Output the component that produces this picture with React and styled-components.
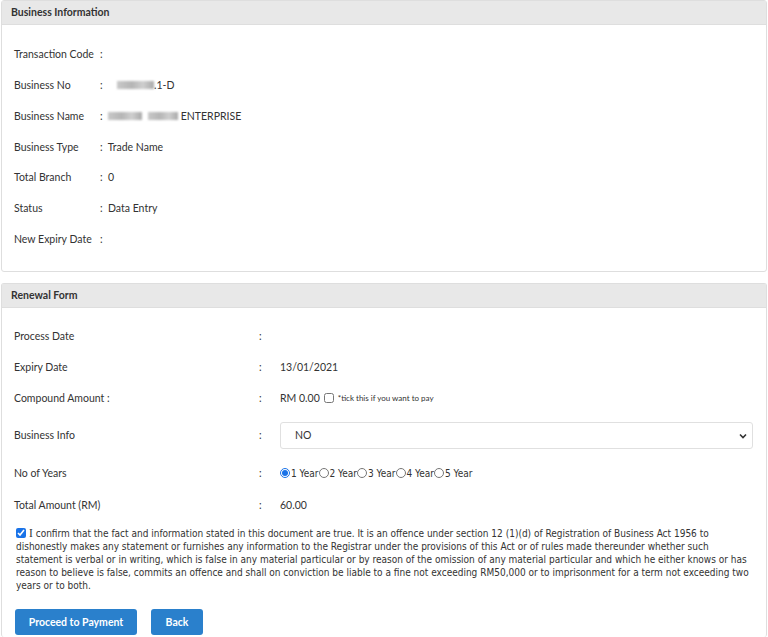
import React, { useState } from 'react';
import styled, { createGlobalStyle } from 'styled-components';

const GlobalStyle = createGlobalStyle`
  html, body {
    margin: 0;
    padding: 0;
    background: #ffffff;
  }
  body {
    font-family: Lato, "Open Sans", sans-serif;
    color: #333333;
  }
`;

const businessRows = [
  { label: 'Transaction Code', value: null },
  { label: 'Business No', value: 'no' },
  { label: 'Business Name', value: 'name' },
  { label: 'Business Type', value: 'Trade Name' },
  { label: 'Total Branch', value: '0' },
  { label: 'Status', value: 'Data Entry' },
  { label: 'New Expiry Date', value: null },
];

const years = ['1 Year', '2 Year', '3 Year', '4 Year', '5 Year'];

function Blur({ w }) {
  return <Blurred $w={w} />;
}

function renderBusinessValue(value) {
  if (value === 'no') {
    return (
      <>
        <BlurGap $w={9} />
        <Blur w={37} />
        .1-D
      </>
    );
  }
  if (value === 'name') {
    return (
      <>
        <Blur w={34} />
        <BlurGap $w={6} />
        <Blur w={30} />
        &nbsp;ENTERPRISE
      </>
    );
  }
  return value;
}

export default function App() {
  const [year, setYear] = useState('1 Year');
  const [agree, setAgree] = useState(true);

  return (
    <Page>
      <GlobalStyle />

      <Panel>
        <PanelHeader>Business Information</PanelHeader>
        <InfoBody>
          {businessRows.map((row) => (
            <InfoRow key={row.label}>
              <InfoLabel>{row.label}</InfoLabel>
              <InfoValue>
                :&nbsp; {row.value && renderBusinessValue(row.value)}
              </InfoValue>
            </InfoRow>
          ))}
        </InfoBody>
      </Panel>

      <Panel $open>
        <PanelHeader>Renewal Form</PanelHeader>
        <FormBody>
          <FormRow>
            <FormLabel>Process Date</FormLabel>
            <Colon>:</Colon>
            <FormValue />
          </FormRow>
          <FormRow>
            <FormLabel>Expiry Date</FormLabel>
            <Colon>:</Colon>
            <FormValue>13/01/2021</FormValue>
          </FormRow>
          <FormRow>
            <FormLabel>Compound Amount :</FormLabel>
            <Colon>:</Colon>
            <FormValue>
              RM 0.00 <SmallCheck type="checkbox" />
              <Hint>*tick this if you want to pay</Hint>
            </FormValue>
          </FormRow>
          <FormRow $h={43}>
            <FormLabel>Business Info</FormLabel>
            <Colon>:</Colon>
            <FormValue>
              <SelectWrap>
                <Select defaultValue="NO">
                  <option>NO</option>
                  <option>YES</option>
                </Select>
                <Chevron viewBox="0 0 10 10">
                  <path d="M2 3.5 L5 6.5 L8 3.5" fill="none" stroke="#333" strokeWidth="1.6" />
                </Chevron>
              </SelectWrap>
            </FormValue>
          </FormRow>
          <FormRow $h={33}>
            <FormLabel>No of Years</FormLabel>
            <Colon>:</Colon>
            <FormValue $tahoma>
              {years.map((y) => (
                <RadioLabel key={y}>
                  <Radio
                    type="radio"
                    name="years"
                    checked={year === y}
                    onChange={() => setYear(y)}
                  />
                  {y}
                </RadioLabel>
              ))}
            </FormValue>
          </FormRow>
          <FormRow>
            <FormLabel>Total Amount (RM)</FormLabel>
            <Colon>:</Colon>
            <FormValue>60.00</FormValue>
          </FormRow>

          <Confirm>
            <ConfirmCheck
              type="checkbox"
              checked={agree}
              onChange={(e) => setAgree(e.target.checked)}
            />
            <Serif>I</Serif> confirm that the fact and information stated in this document are true. It is an
            offence under section 12 (1)(d) of Registration of Business Act 1956 to dishonestly makes any
            statement or furnishes any information to the Registrar under the provisions of this Act or of
            rules made thereunder whether such statement is verbal or in writing, which is false in any
            material particular or by reason of the omission of any material particular and which he either
            knows or has reason to believe is false, commits an offence and shall on conviction be liable to
            a fine not exceeding RM50,000 or to imprisonment for a term not exceeding two years or to both.
          </Confirm>

          <Actions>
            <Button $w={122}>Proceed to Payment</Button>
            <Button $w={52}>Back</Button>
          </Actions>
        </FormBody>
      </Panel>
    </Page>
  );
}

const Page = styled.div`
  padding: 0 1px;
  display: flex;
  flex-direction: column;
  gap: 11px;
  height: 637px;
  overflow: hidden;
`;

const Panel = styled.section`
  border: 1px solid #dedede;
  border-radius: 3px;
  background: #ffffff;
  ${(p) => p.$open && 'border-bottom: none; flex: 1;'}
`;

const PanelHeader = styled.div`
  height: 23px;
  line-height: 23px;
  padding: 0 9px;
  background: #e8e8e8;
  border-bottom: 1px solid #dedede;
  font-size: 10.5px;
  font-weight: 700;
  color: #333333;
`;

const InfoBody = styled.div`
  padding: 14px 12px 17px;
`;

const InfoRow = styled.div`
  display: flex;
  align-items: center;
  height: 30.75px;
  font-size: 10.5px;
`;

const InfoLabel = styled.div`
  width: 86px;
`;

const InfoValue = styled.div`
  display: flex;
  align-items: center;
  white-space: pre;
`;

const Blurred = styled.span`
  display: inline-block;
  width: ${(p) => p.$w}px;
  height: 8px;
  background: linear-gradient(90deg, #c8c8c8, #b5b5b5 40%, #cfcfcf 70%, #a9a9a9);
  filter: blur(1.2px);
`;

const BlurGap = styled.span`
  display: inline-block;
  width: ${(p) => p.$w}px;
`;

const FormBody = styled.div`
  padding: 12.5px 12px 0;
`;

const FormRow = styled.div`
  display: flex;
  align-items: center;
  height: ${(p) => p.$h || 31}px;
  font-size: 10.5px;
`;

const FormLabel = styled.div`
  width: 245px;
  flex-shrink: 0;
`;

const Colon = styled.div`
  width: 21px;
  flex-shrink: 0;
`;

const FormValue = styled.div`
  flex: 1;
  display: flex;
  align-items: center;
  ${(p) => p.$tahoma && 'font-family: "DejaVu Sans Condensed", "DejaVu Sans", sans-serif; font-size: 10px;'}
`;

const SmallCheck = styled.input`
  width: 10px;
  height: 10px;
  margin: 0 4px 0 4px;
`;

const Hint = styled.span`
  font-size: 8px;
`;

const SelectWrap = styled.div`
  position: relative;
  flex: 1;
  margin-right: 1px;
`;

const Select = styled.select`
  width: 100%;
  height: 27px;
  padding: 0 14px;
  border: 1px solid #e0e0e0;
  border-radius: 3px;
  background: #ffffff;
  appearance: none;
  font-family: Lato, "Open Sans", sans-serif;
  font-size: 10.5px;
  color: #333333;
  outline: none;
`;

const Chevron = styled.svg`
  position: absolute;
  right: 5px;
  top: 9px;
  width: 10px;
  height: 10px;
  pointer-events: none;
`;

const RadioLabel = styled.label`
  display: inline-flex;
  align-items: center;
  color: #333333;
`;

const Radio = styled.input`
  width: 10px;
  height: 10px;
  margin: 0 1px 0 0;
  accent-color: #1a73e8;
`;

const Confirm = styled.p`
  margin: 6px 0 0;
  padding-left: 2px;
  font-family: "DejaVu Sans Condensed", "DejaVu Sans", sans-serif;
  font-size: 10px;
  line-height: 13px;
  color: #333333;
`;

const ConfirmCheck = styled.input`
  width: 10px;
  height: 10px;
  margin: 0 3px 0 0;
  vertical-align: -1px;
  accent-color: #1a73e8;
`;

const Serif = styled.span`
  font-family: "Liberation Serif", serif;
  font-size: 11.5px;
`;

const Actions = styled.div`
  display: flex;
  gap: 14px;
  margin-top: 17px;
  padding-left: 1px;
`;

const Button = styled.button`
  width: ${(p) => p.$w}px;
  height: 26px;
  padding: 0;
  border: none;
  border-radius: 3px;
  background: #2a80cc;
  color: #ffffff;
  font-family: Lato, "Open Sans", sans-serif;
  font-size: 10.5px;
  font-weight: 700;
  cursor: pointer;
`;
